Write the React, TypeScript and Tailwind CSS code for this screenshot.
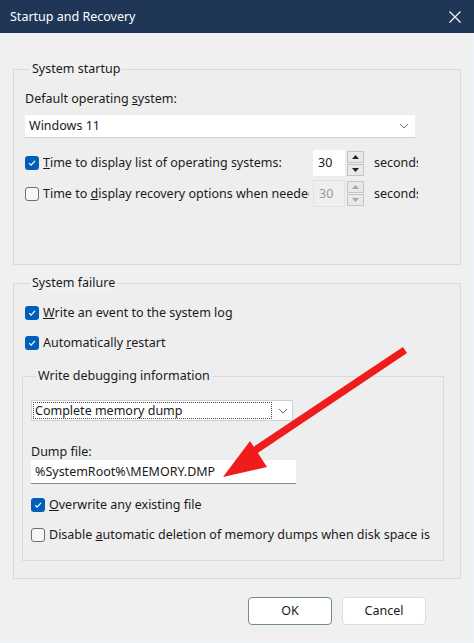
import React from "react"

function Check({ checked }: { checked?: boolean }) {
  if (checked) {
    return (
      <span className="w-[14px] h-[14px] rounded-[3px] bg-[#005fb8] flex items-center justify-center shrink-0">
        <svg width="10" height="10" viewBox="0 0 10 10">
          <path d="M2.2 5.2l1.9 1.9 3.9-4.2" stroke="white" strokeWidth="1.2" fill="none" />
        </svg>
      </span>
    )
  }
  return <span className="w-[14px] h-[14px] rounded-[3px] border border-[#6e6e6e] bg-[#f6f6f6] shrink-0" />
}

function Chevron() {
  return (
    <svg width="10" height="6" viewBox="0 0 10 6">
      <path d="M1 1l4 4 4-4" stroke="#6a6a6a" strokeWidth="1" fill="none" />
    </svg>
  )
}

function Spin({ disabled }: { disabled?: boolean }) {
  const arrow = disabled ? "#a8a8a8" : "#222"
  return (
    <div className="flex items-center">
      <div
        className={
          disabled
            ? "w-[32px] h-[27px] flex items-center pl-[5px] text-[#9a9a9a] bg-[#efefef] border border-[#e2e2e2]"
            : "w-[32px] h-[26px] flex items-center pl-[5px] bg-white"
        }
      >
        30
      </div>
      <div className="ml-[2px] flex flex-col gap-[1px]">
        <div className="w-[17px] h-[12px] border border-[#c4c4c4] bg-[#e9e9e9] flex items-center justify-center">
          <svg width="7" height="4" viewBox="0 0 7 4">
            <path d="M0 4L3.5 0L7 4Z" fill={arrow} />
          </svg>
        </div>
        <div className="w-[17px] h-[12px] border border-[#c4c4c4] bg-[#e9e9e9] flex items-center justify-center">
          <svg width="7" height="4" viewBox="0 0 7 4">
            <path d="M0 0L3.5 4L7 0Z" fill={arrow} />
          </svg>
        </div>
      </div>
      <div className="ml-[10px] w-[44px] overflow-hidden whitespace-nowrap">seconds</div>
    </div>
  )
}

export default function App() {
  return (
    <div className="relative w-[474px] h-[643px] overflow-hidden bg-[#eef2f7] text-[12.5px] leading-[18px] text-[#1a1a1a] font-['Noto_Sans',sans-serif]">
      <div className="h-[33px] bg-[#1f3656] flex items-center justify-between pl-[10px] pr-[13px] text-white text-[12.5px]">
        <span>Startup and Recovery</span>
        <svg width="12" height="12" viewBox="0 0 12 12">
          <path d="M0.5 0.5l11 11M11.5 0.5l-11 11" stroke="white" strokeWidth="1.1" />
        </svg>
      </div>

      <div className="h-[607px] mx-[3px] bg-[#f0f0f0] rounded-b-[8px] pl-[10px] pr-[10px] pt-[27px] flex flex-col">
        <fieldset className="border border-[#dadada] bg-[#eeeeee] pl-[11px] pb-[57px]">
          <legend className="ml-[5px] px-[2px] bg-[#f0f0f0]">System startup</legend>
          <div className="mt-[12px]">
            Default operating <span className="underline">s</span>ystem:
          </div>
          <div className="mt-[7px] w-[390px] h-[23px] bg-white border-b border-[#d2d2d2] flex items-center justify-between pl-[4px] pr-[6px]">
            <span>Windows 11</span>
            <Chevron />
          </div>
          <div className="mt-[12px] flex items-center">
            <div className="w-[288px] flex items-center gap-[4px] overflow-hidden whitespace-nowrap">
              <Check checked />
              <span>
                <span className="underline">T</span>ime to display list of operating systems:
              </span>
            </div>
            <Spin />
          </div>
          <div className="mt-[4px] flex items-center">
            <div className="w-[284px] mr-[4px] flex items-center gap-[4px] overflow-hidden whitespace-nowrap">
              <Check />
              <span>
                Time to <span className="underline">d</span>isplay recovery options when needed:
              </span>
            </div>
            <Spin disabled />
          </div>
        </fieldset>

        <fieldset className="mt-[9px] border border-[#dadada] bg-[#eeeeee] pl-[11px] pb-[17px]">
          <legend className="ml-[5px] px-[2px] bg-[#f0f0f0]">System failure</legend>
          <div className="mt-[12px] flex items-center gap-[4px]">
            <Check checked />
            <span>
              <span className="underline">W</span>rite an event to the system log
            </span>
          </div>
          <div className="mt-[12px] flex items-center gap-[4px]">
            <Check checked />
            <span>
              Automatically <span className="underline">r</span>estart
            </span>
          </div>

          <fieldset className="mt-[15px] -ml-[3px] w-[422px] border border-[#dadada] pl-[8px] pb-[16px] overflow-hidden">
            <legend className="ml-[5px] px-[2px]">Write debugging information</legend>
            <div className="mt-[15px] w-[262px] h-[21px] bg-white border border-[#cfcfcf] flex items-stretch">
              <div className="flex-1 m-[1px] border border-dotted border-[#444] flex items-center pl-[1px]">
                Complete memory dump
              </div>
              <div className="w-[19px] flex items-center justify-center">
                <Chevron />
              </div>
            </div>
            <div className="mt-[23px] leading-[16px]">Dump file:</div>
            <div className="w-[265px] h-[24px] bg-white border-b border-[#8a8a8a] flex items-center pl-[4px]">
              %SystemRoot%\MEMORY.DMP
            </div>
            <div className="mt-[12px] flex items-center gap-[4px]">
              <Check checked />
              <span>
                <span className="underline">O</span>verwrite any existing file
              </span>
            </div>
            <div className="mt-[12px] flex items-center gap-[4px] whitespace-nowrap w-[400px] overflow-hidden">
              <Check />
              <span>
                Disable <span className="underline">a</span>utomatic deletion of memory dumps when disk space is low
              </span>
            </div>
          </fieldset>
        </fieldset>

        <div className="mt-[18px] flex justify-end gap-[10px] pr-[35px]">
          <button className="w-[84px] h-[28px] rounded-[4px] bg-white border border-[#6f8a99] text-[12.5px]">OK</button>
          <button className="w-[84px] h-[28px] rounded-[4px] bg-white border border-[#dcdcdc] text-[12.5px]">Cancel</button>
        </div>
      </div>

      <svg className="absolute inset-0 pointer-events-none" width="474" height="643" viewBox="0 0 474 643">
        <line x1="405" y1="350" x2="248" y2="455" stroke="#ee1c1c" strokeWidth="7.5" />
        <polygon points="223,477 250,441 267,467" fill="#ee1c1c" />
      </svg>
    </div>
  )
}
